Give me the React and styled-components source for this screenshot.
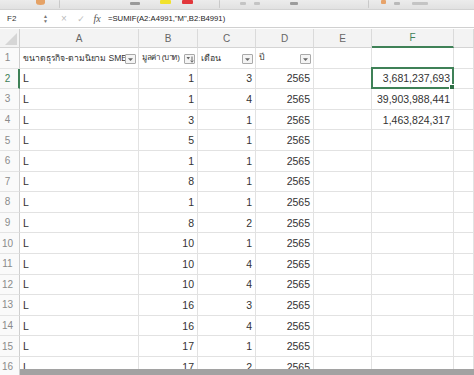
import React from "react";
import styled, { createGlobalStyle } from "styled-components";

const Global = createGlobalStyle`
  html, body { margin: 0; padding: 0; background: #fff; overflow: hidden; }
  body { font-family: "Liberation Sans", "Noto Sans", "DejaVu Sans", sans-serif; }
  #root { width: 474px; height: 375px; }
`;

const Window = styled.div`
  position: relative;
  width: 474px;
  height: 375px;
  overflow: hidden;
  display: flex;
  flex-direction: column;
  background: #fff;
`;

const Ribbon = styled.div`
  flex: none;
  height: 9px;
  background: linear-gradient(#ececec, #e1e1e1);
  border-bottom: 1px solid #d2d2d2;
  display: flex;
  align-items: flex-start;
  overflow: hidden;
`;

const RibbonMark = styled.div`
  flex: none;
  margin-left: ${(p) => p.$gap}px;
  width: ${(p) => p.$w}px;
  height: ${(p) => p.$h}px;
  background: ${(p) => p.$c};
  border-radius: ${(p) => (p.$round ? "0 0 50% 50%" : "1px")};
  margin-top: ${(p) => p.$top || 0}px;
`;

const FormulaBar = styled.div`
  flex: none;
  height: 17px;
  display: flex;
  align-items: center;
  border-bottom: 1px solid #d0d0d0;
  background: #fff;
  font-size: 8px;
  color: #333;
`;

const NameBox = styled.div`
  flex: none;
  width: 55px;
  height: 100%;
  display: flex;
  align-items: center;
  justify-content: space-between;
  padding: 0 7px 0 7px;
  box-sizing: border-box;
`;

const Spinner = styled.div`
  display: flex;
  flex-direction: column;
  align-items: center;
  gap: 1px;
  font-size: 5px;
  line-height: 4px;
  color: #777;
`;

const BarIcon = styled.span`
  flex: none;
  width: ${(p) => p.$w}px;
  margin-left: ${(p) => p.$ml || 0}px;
  text-align: center;
  color: ${(p) => p.$c};
  font-size: ${(p) => p.$size}px;
  font-family: ${(p) => (p.$serif ? '"Liberation Serif", serif' : "inherit")};
  font-style: ${(p) => (p.$serif ? "italic" : "normal")};
`;

const FormulaText = styled.div`
  margin-left: 5px;
  white-space: nowrap;
  font-size: 7.7px;
  color: #222;
`;

const Grid = styled.div`
  flex: none;
  display: grid;
  grid-template-columns: 20px 119px 59px 58px 58px 58px 82px 1fr;
  grid-template-rows: 19px;
  grid-auto-rows: 20.6px;
  margin-top: 1px;
`;

const ColHead = styled.div`
  background: #f3f3f3;
  border-right: 1px solid #dadada;
  border-bottom: ${(p) => (p.$active ? "2px solid #3f8157" : "1px solid #d4d4d4")};
  box-sizing: border-box;
  display: flex;
  align-items: center;
  justify-content: center;
  font-size: 10px;
  color: ${(p) => (p.$active ? "#3f8157" : "#666")};
`;

const Corner = styled.div`
  background: #f3f3f3;
  border-right: 1px solid #cfcfcf;
  border-bottom: 1px solid #d4d4d4;
  box-sizing: border-box;
  display: flex;
  align-items: flex-end;
  justify-content: flex-end;
  padding: 0 2px 2px 0;
`;

const CornerTri = styled.div`
  width: 0;
  height: 0;
  border-left: 12px solid transparent;
  border-bottom: 12px solid #d6d6d6;
`;

const RowHead = styled.div`
  background: #fafafa;
  border-right: ${(p) => (p.$active ? "2px solid #3f8157" : "1px solid #cfcfcf")};
  border-bottom: 1px solid #e4e4e4;
  box-sizing: border-box;
  display: flex;
  align-items: center;
  justify-content: center;
  padding-right: ${(p) => (p.$active ? 3 : 4)}px;
  font-size: 10px;
  color: ${(p) => (p.$active ? "#3f8157" : "#8a8a8a")};
`;

const Cell = styled.div`
  position: relative;
  background: #fff;
  border-right: 1px solid #e2e2e2;
  border-bottom: 1px solid #e2e2e2;
  box-sizing: border-box;
  display: flex;
  align-items: center;
  justify-content: ${(p) => (p.$right ? "flex-end" : "flex-start")};
  padding: ${(p) => (p.$head ? "0 2px 0 3px" : "0 3px")};
  font-size: 10.5px;
  color: #333;
  white-space: nowrap;
  min-width: 0;
`;

const HeadLabel = styled.span`
  flex: 1;
  min-width: 0;
  white-space: nowrap;
  font-size: ${(p) => p.$size || 8.7}px;
  letter-spacing: ${(p) => p.$ls || 0}px;
  align-self: ${(p) => (p.$raise ? "flex-start" : "center")};
  margin-top: ${(p) => (p.$raise ? 2 : 0)}px;
`;

const DropBtn = styled.span`
  flex: none;
  width: 9px;
  height: 8px;
  margin-left: 1px;
  border: 1px solid #a9a9a9;
  border-radius: 1px;
  background: #f4f4f4;
  display: flex;
  align-items: center;
  justify-content: center;
  margin-top: 3px;
`;

const Selection = styled.div`
  position: absolute;
  inset: -2px -1px -1px -1px;
  border: 2px solid #3f8157;
  pointer-events: none;
`;

const Handle = styled.div`
  position: absolute;
  right: -3px;
  bottom: -3px;
  width: 4px;
  height: 4px;
  background: #2f6f45;
  border: 1px solid #fff;
`;

const ScrollBar = styled.div`
  position: absolute;
  left: 20px;
  right: 0;
  top: 369px;
  height: 7px;
  background: #a2a2a2;
`;

function DownArrow() {
  return (
    <svg width="7" height="5" viewBox="0 0 7 5">
      <path d="M1 1.2 L6 1.2 L3.5 4 Z" fill="#666" />
    </svg>
  );
}

function SortFilter() {
  return (
    <svg width="8" height="7" viewBox="0 0 8 7">
      <path d="M0.5 1 L4 1 L2.25 3.5 Z" fill="#666" />
      <path d="M6 0.5 L6 6" stroke="#666" strokeWidth="1" />
      <path d="M4.6 4.6 L6 6.3 L7.4 4.6" stroke="#666" strokeWidth="0.9" fill="none" />
    </svg>
  );
}

const rows = [
  [1, 3],
  [1, 4],
  [3, 1],
  [5, 1],
  [1, 1],
  [8, 1],
  [1, 1],
  [8, 2],
  [10, 1],
  [10, 4],
  [10, 4],
  [16, 3],
  [16, 4],
  [17, 1],
  [17, 2],
];
const fValues = ["3,681,237,693", "39,903,988,441", "1,463,824,317"];

const ribbon = [
  { gap: 36, w: 9, h: 5, c: "#e5a266", round: true },
  { gap: 14, w: 1, h: 8, c: "#c9c9c9" },
  { gap: 70, w: 10, h: 3, c: "#9a9a9a", top: 2 },
  { gap: 20, w: 11, h: 4, c: "#f1e22c" },
  { gap: 11, w: 11, h: 4, c: "#e2373b" },
  { gap: 26, w: 1, h: 8, c: "#c9c9c9" },
  { gap: 20, w: 6, h: 3, c: "#c4c4c4", top: 2 },
  { gap: 8, w: 6, h: 3, c: "#c4c4c4", top: 2 },
  { gap: 30, w: 8, h: 3, c: "#9c9c9c", top: 2 },
  { gap: 70, w: 1, h: 8, c: "#c9c9c9" },
  { gap: 12, w: 5, h: 4, c: "#e7a36a", top: 0 },
  { gap: 8, w: 6, h: 3, c: "#b9b9b9", top: 2 },
  { gap: 12, w: 16, h: 3, c: "#c4c4c4", top: 2 },
];

export default function App() {
  return (
    <Window>
      <Global />
      <Ribbon>
        {ribbon.map((r, i) => (
          <RibbonMark key={i} $gap={r.gap} $w={r.w} $h={r.h} $c={r.c} $round={r.round} $top={r.top} />
        ))}
      </Ribbon>
      <FormulaBar>
        <NameBox>
          <span>F2</span>
          <Spinner>
            <span>▲</span>
            <span>▼</span>
          </Spinner>
        </NameBox>
        <BarIcon $w={14} $c="#bbb" $size={10} $ml={2}>×</BarIcon>
        <BarIcon $w={20} $c="#bbb" $size={9}>✓</BarIcon>
        <BarIcon $w={12} $c="#555" $size={10} $serif>fx</BarIcon>
        <FormulaText>=SUMIF(A2:A4991,"M",B2:B4991)</FormulaText>
      </FormulaBar>
      <Grid>
        <Corner>
          <CornerTri />
        </Corner>
        {["A", "B", "C", "D", "E", "F", ""].map((c) => (
          <ColHead key={c || "G"} $active={c === "F"}>{c}</ColHead>
        ))}

        <RowHead>1</RowHead>
        <Cell $head>
          <HeadLabel $size={8.6} $ls={-0.1}>ขนาดธุรกิจ-ตามนิยาม SME</HeadLabel>
          <DropBtn><DownArrow /></DropBtn>
        </Cell>
        <Cell $head>
          <HeadLabel $size={8} $ls={-0.3}>มูลค่า (บาท)</HeadLabel>
          <DropBtn><SortFilter /></DropBtn>
        </Cell>
        <Cell $head>
          <HeadLabel>เดือน</HeadLabel>
          <DropBtn><DownArrow /></DropBtn>
        </Cell>
        <Cell $head>
          <HeadLabel $raise>ปี</HeadLabel>
          <DropBtn><DownArrow /></DropBtn>
        </Cell>
        <Cell />
        <Cell />
        <Cell />

        {rows.map(([b, c], i) => {
          const n = i + 2;
          const f = fValues[i];
          return (
            <React.Fragment key={n}>
              <RowHead $active={n === 2}>{n}</RowHead>
              <Cell>L</Cell>
              <Cell $right>{b}</Cell>
              <Cell $right>{c}</Cell>
              <Cell $right>2565</Cell>
              <Cell />
              <Cell $right>
                {f}
                {n === 2 && (
                  <Selection>
                    <Handle />
                  </Selection>
                )}
              </Cell>
              <Cell />
            </React.Fragment>
          );
        })}
      </Grid>
      <ScrollBar />
    </Window>
  );
}
